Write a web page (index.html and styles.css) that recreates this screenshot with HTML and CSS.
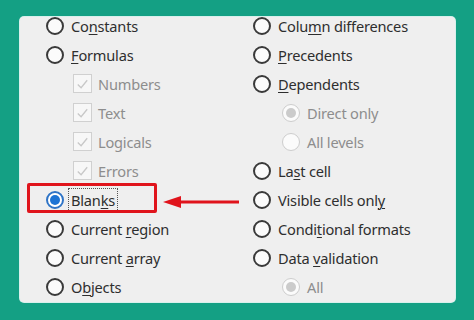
FILE: index.html
```html
<!DOCTYPE html>
<html>
<head>
<meta charset="utf-8">
<link rel="stylesheet" href="styles.css">
</head>
<body>
<div class="frame">
  <div class="panel">
    <div class="cols">
      <div class="col col-left">
        <div class="row"><span class="radio"></span><span class="lbl">Co<u>n</u>stants</span></div>
        <div class="row"><span class="radio"></span><span class="lbl"><u>F</u>ormulas</span></div>
        <div class="row sub"><span class="check"><svg viewBox="0 0 18 18" width="18" height="18"><path d="M4 9.5 L7.5 13 L14 5" fill="none" stroke="#c8c8c8" stroke-width="1.4"/></svg></span><span class="lbl dis">Numbers</span></div>
        <div class="row sub"><span class="check"><svg viewBox="0 0 18 18" width="18" height="18"><path d="M4 9.5 L7.5 13 L14 5" fill="none" stroke="#c8c8c8" stroke-width="1.4"/></svg></span><span class="lbl dis">Text</span></div>
        <div class="row sub"><span class="check"><svg viewBox="0 0 18 18" width="18" height="18"><path d="M4 9.5 L7.5 13 L14 5" fill="none" stroke="#c8c8c8" stroke-width="1.4"/></svg></span><span class="lbl dis">Logicals</span></div>
        <div class="row sub"><span class="check"><svg viewBox="0 0 18 18" width="18" height="18"><path d="M4 9.5 L7.5 13 L14 5" fill="none" stroke="#c8c8c8" stroke-width="1.4"/></svg></span><span class="lbl dis">Errors</span></div>
        <div class="row"><span class="radio on"></span><span class="lbl focus">Blan<u>k</u>s</span></div>
        <div class="row"><span class="radio"></span><span class="lbl">Current <u>r</u>egion</span></div>
        <div class="row"><span class="radio"></span><span class="lbl">Current <u>a</u>rray</span></div>
        <div class="row"><span class="radio"></span><span class="lbl">O<u>b</u>jects</span></div>
      </div>
      <div class="col col-right">
        <div class="row"><span class="radio"></span><span class="lbl">Colu<u>m</u>n differences</span></div>
        <div class="row"><span class="radio"></span><span class="lbl"><u>P</u>recedents</span></div>
        <div class="row"><span class="radio"></span><span class="lbl"><u>D</u>ependents</span></div>
        <div class="row sub"><span class="radio dis dot"></span><span class="lbl dis">Direct only</span></div>
        <div class="row sub"><span class="radio dis"></span><span class="lbl dis">All levels</span></div>
        <div class="row"><span class="radio"></span><span class="lbl">La<u>s</u>t cell</span></div>
        <div class="row"><span class="radio"></span><span class="lbl">Visible cells onl<u>y</u></span></div>
        <div class="row"><span class="radio"></span><span class="lbl">Condi<u>t</u>ional formats</span></div>
        <div class="row"><span class="radio"></span><span class="lbl">Data <u>v</u>alidation</span></div>
        <div class="row sub"><span class="radio dis dot"></span><span class="lbl dis">All</span></div>
      </div>
    </div>
  </div>
  <div class="highlight"></div>
  <svg class="arrow" width="80" height="16" viewBox="0 0 80 16">
    <line x1="14" y1="8" x2="76" y2="8" stroke="#e0141c" stroke-width="3.2"/>
    <polygon points="0,8 18,2 18,14" fill="#e0141c"/>
  </svg>
</div>
</body>
</html>
```
FILE: styles.css
```css
html, body {
  margin: 0;
  padding: 0;
}
body {
  width: 474px;
  height: 320px;
  background: #14a084;
  font-family: "Noto Sans", "Open Sans", "Liberation Sans", sans-serif;
  overflow: hidden;
}
.frame {
  position: relative;
  width: 474px;
  height: 320px;
  padding: 17px 19px 18px 20px;
  box-sizing: border-box;
}
.panel {
  height: 100%;
  background: #efefef;
  border-radius: 4px;
  box-shadow: 0 0 0 1px #d8f0ec;
  overflow: hidden;
}
.cols {
  display: grid;
  grid-template-columns: 207px 1fr;
  margin-top: -6px;
  padding-left: 26px;
}
.row {
  height: 29px;
  display: flex;
  align-items: center;
  gap: 7px;
  font-size: 14.6px;
  letter-spacing: -0.2px;
  color: #2e2e2e;
  white-space: nowrap;
}
.col-left .row.sub {
  padding-left: 27px;
  gap: 6px;
}
.col-right .row.sub {
  padding-left: 29px;
}
.lbl u {
  text-decoration: underline;
  text-underline-offset: 2px;
  text-decoration-thickness: 1px;
}
.lbl.dis {
  color: #8d8d8d;
}
.radio {
  width: 18px;
  height: 18px;
  box-sizing: border-box;
  border: 2px solid #3a3a3a;
  border-radius: 50%;
  background: #fbfbfb;
  flex: none;
  display: flex;
  align-items: center;
  justify-content: center;
}
.radio.on {
  border-color: #2f74c6;
  background: #fff;
}
.radio.on::after {
  content: "";
  width: 10px;
  height: 10px;
  border-radius: 50%;
  background: #1c73d4;
}
.radio.dis {
  border: 1.5px solid #cdcdcd;
  background: #fbfbfb;
}
.radio.dot::after {
  content: "";
  width: 10px;
  height: 10px;
  border-radius: 50%;
  background: #cbcbcb;
}
.check {
  width: 19px;
  height: 19px;
  box-sizing: border-box;
  border: 1.5px solid #d0d0d0;
  background: #f7f7f7;
  flex: none;
  display: flex;
  align-items: center;
  justify-content: center;
}
.check svg {
  display: block;
}
.focus {
  outline: 1px dotted #555;
  outline-offset: 0;
  padding: 1px 2px;
  margin-left: -2px;
  line-height: 20px;
}
.highlight {
  position: absolute;
  left: 27px;
  top: 183px;
  width: 130px;
  height: 30px;
  box-sizing: border-box;
  border: 3px solid #e0141c;
  border-radius: 2px;
}
.arrow {
  position: absolute;
  left: 163px;
  top: 194px;
}
```
